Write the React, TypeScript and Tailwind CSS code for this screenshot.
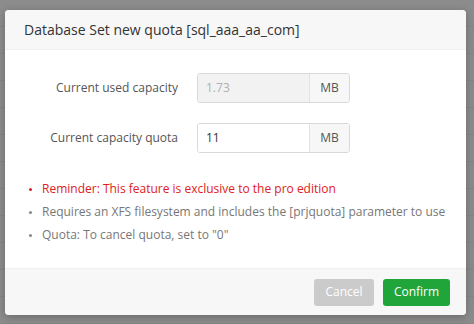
import * as React from "react";

const notes = [
  { text: "Reminder: This feature is exclusive to the pro edition", red: true },
  { text: "Requires an XFS filesystem and includes the [prjquota] parameter to use", red: false },
  { text: 'Quota: To cancel quota, set to "0"', red: false },
];

function QuotaRow({ label, value, disabled }: { label: string; value: string; disabled?: boolean }) {
  return (
    <div className="flex items-center">
      <label className="block w-[192px] shrink-0 pr-[19px] text-right text-[12px] text-[#555]">{label}</label>
      <div className="flex h-[30px] w-[153px] shrink-0 overflow-hidden rounded-[3px] border border-[#d9d9d9]">
        <input
          readOnly
          value={value}
          disabled={disabled}
          className={`w-[111px] min-w-0 shrink-0 px-[8px] text-[12px] outline-none ${
            disabled ? "bg-[#f2f2f2] text-[#b0b0b0]" : "bg-white text-[#333]"
          }`}
        />
        <span className="flex flex-1 items-center justify-center border-l border-[#e3e3e3] bg-[#f7f7f7] text-[12px] text-[#555]">
          MB
        </span>
      </div>
    </div>
  );
}

export default function App() {
  return (
    <div
      className="relative h-[324px] w-[474px] overflow-hidden bg-[#8c8c8c] pt-[10px] pl-[5px]"
      style={{ fontFamily: '"Open Sans", "Noto Sans", sans-serif' }}
    >
      <div className="absolute inset-0 flex flex-col">
        {Array.from({ length: 12 }).map((_, i) => (
          <div key={i} className="h-[34px] border-b border-[#858585]" />
        ))}
      </div>
      <div className="relative flex h-[305px] w-[461px] flex-col overflow-hidden rounded-[4px] bg-white shadow-[0_2px_8px_rgba(0,0,0,0.25)]">
        <div className="flex h-[40px] items-center border-b border-[#f0f0f0] bg-[#f7f7f7] pl-[19px] text-[14px] text-[#333]">
          Database Set new quota [sql_aaa_aa_com]
        </div>
        <div className="flex flex-1 flex-col pt-[23px]">
          <div className="flex flex-col gap-[20px]">
            <QuotaRow label="Current used capacity" value="1.73" disabled />
            <QuotaRow label="Current capacity quota" value="11" />
          </div>
          <ul className="mt-[28px] flex flex-col gap-[7px] pl-[24px] text-[12px]">
            {notes.map((n) => (
              <li key={n.text} className={`flex items-center leading-[16px] ${n.red ? "text-[#e02020]" : "text-[#777]"}`}>
                <span className={`mr-[10px] h-[3px] w-[3px] rounded-full ${n.red ? "bg-[#e02020]" : "bg-[#888]"}`} />
                {n.text}
              </li>
            ))}
          </ul>
        </div>
        <div className="flex h-[47px] items-center justify-end gap-[9px] border-t border-[#f0f0f0] bg-[#f7f7f7] pr-[16px]">
          <button className="h-[27px] w-[60px] rounded-[3px] bg-[#cbcbcb] text-[12px] text-white">Cancel</button>
          <button className="h-[27px] w-[67px] rounded-[3px] bg-[#20a53a] text-[12px] text-white">Confirm</button>
        </div>
      </div>
    </div>
  );
}
